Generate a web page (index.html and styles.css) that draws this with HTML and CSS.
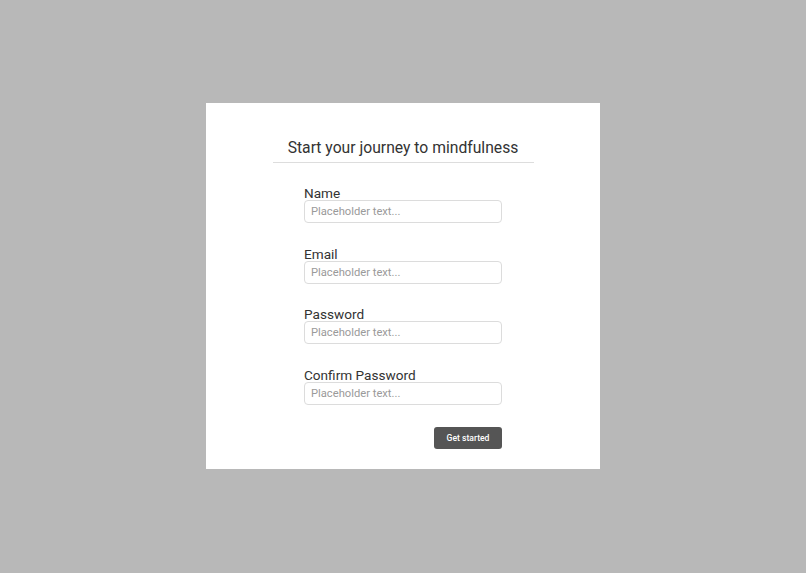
FILE: index.html
```html
<!DOCTYPE html>
<html>
<head>
<meta charset="utf-8">
<link rel="stylesheet" href="styles.css">
</head>
<body>
<div class="card">
  <h1 class="title">Start your journey to mindfulness</h1>
  <form class="form">
    <div class="field">
      <label class="label">Name</label>
      <input class="input" type="text" placeholder="Placeholder text...">
    </div>
    <div class="field">
      <label class="label">Email</label>
      <input class="input" type="text" placeholder="Placeholder text...">
    </div>
    <div class="field">
      <label class="label">Password</label>
      <input class="input" type="text" placeholder="Placeholder text...">
    </div>
    <div class="field">
      <label class="label">Confirm Password</label>
      <input class="input" type="text" placeholder="Placeholder text...">
    </div>
    <div class="actions">
      <button class="button" type="button">Get started</button>
    </div>
  </form>
</div>
</body>
</html>
```
FILE: styles.css
```css
html, body {
  margin: 0;
  padding: 0;
  background: #b8b8b8;
  font-family: Roboto, "Liberation Sans", sans-serif;
}
.card {
  box-sizing: border-box;
  width: 394px;
  height: 366px;
  margin: 103px 0 0 206px;
  background: #ffffff;
  padding-top: 35px;
  display: flex;
  flex-direction: column;
  align-items: center;
}
.title {
  margin: 0;
  width: 261px;
  box-sizing: border-box;
  font-size: 15.7px;
  font-weight: 400;
  line-height: 20px;
  color: #333;
  text-align: center;
  padding-bottom: 4px;
  border-bottom: 1px solid #dddddd;
}
.form {
  width: 198px;
  margin-top: 24px;
  display: flex;
  flex-direction: column;
  gap: 24.67px;
}
.field {
  display: flex;
  flex-direction: column;
}
.label {
  font-size: 13.6px;
  line-height: 13px;
  color: #333;
}
.input {
  box-sizing: border-box;
  width: 198px;
  height: 23px;
  border: 1px solid #dcdcdc;
  border-radius: 4px;
  padding: 0 6px;
  font-family: Roboto, "Liberation Sans", sans-serif;
  font-size: 11.2px;
  color: #333;
  outline: none;
}
.input::placeholder {
  color: #9a9a9a;
}
.actions {
  display: flex;
  justify-content: flex-end;
  margin-top: -2.5px;
}
.button {
  width: 68px;
  height: 22px;
  background: #555555;
  color: #fff;
  border: none;
  border-radius: 3px;
  font-family: Roboto, "Liberation Sans", sans-serif;
  font-size: 8.6px;
  font-weight: 500;
  padding: 0;
}
```
